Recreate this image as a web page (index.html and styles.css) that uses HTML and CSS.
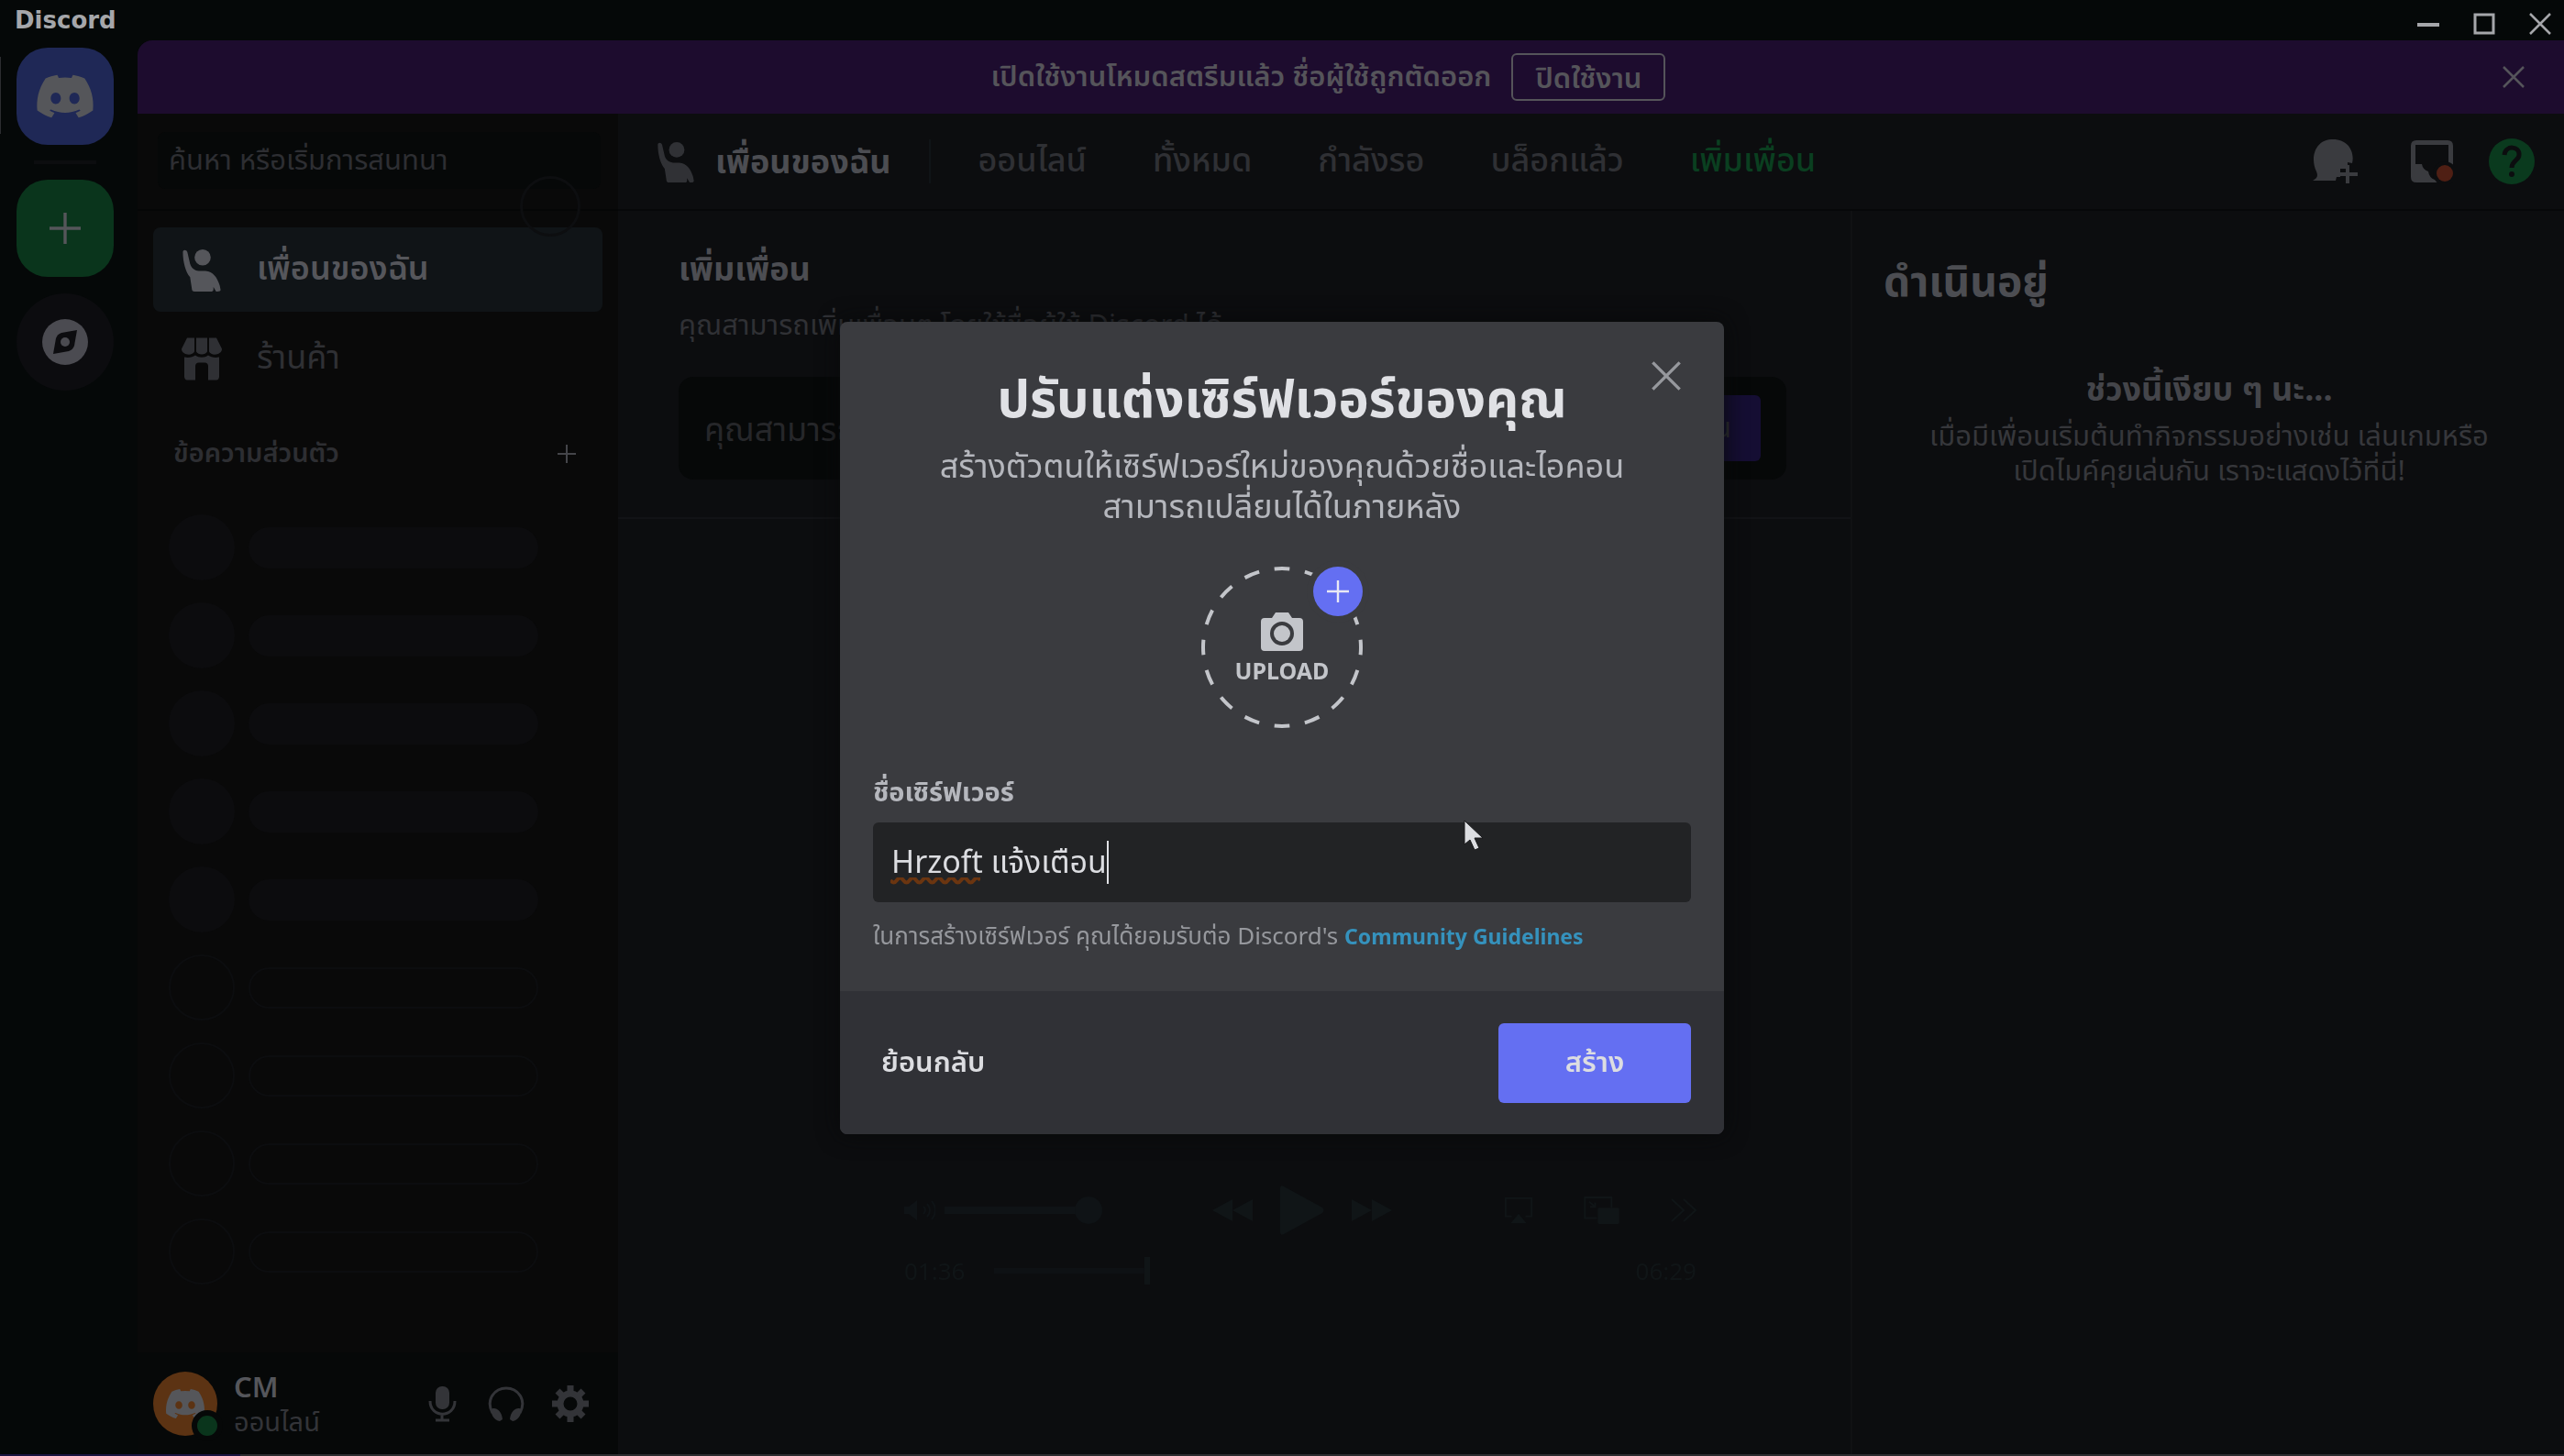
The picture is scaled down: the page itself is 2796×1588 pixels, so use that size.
FILE: index.html
```html
<!DOCTYPE html>
<html lang="th">
<head>
  <meta charset="UTF-8" />
  <title>Discord</title>
  <link rel="stylesheet" href="styles.css">
</head>
<body>

  <!-- shared icons -->
  <svg class="sprite" aria-hidden="true">
    <symbol id="logo" viewBox="0 0 24 24">
      <path fill="currentColor" d="M19.27 5.33C17.94 4.71 16.5 4.26 15 4a.09.09 0 0 0-.07.03c-.18.33-.39.76-.53 1.09a16.09 16.09 0 0 0-4.8 0c-.14-.34-.35-.76-.54-1.09c-.01-.02-.04-.03-.07-.03c-1.5.26-2.93.71-4.27 1.33c-.01 0-.02.01-.03.02c-2.72 4.07-3.47 8.03-3.1 11.95c0 .02.01.04.03.05c1.8 1.32 3.53 2.12 5.24 2.65c.03.01.06 0 .07-.02c.4-.55.76-1.13 1.07-1.74c.02-.04 0-.08-.04-.09c-.57-.22-1.11-.48-1.64-.78c-.04-.02-.04-.08-.01-.11c.11-.08.22-.17.33-.25c.02-.02.05-.02.07-.01c3.44 1.57 7.15 1.57 10.55 0c.02-.01.05-.01.07.01c.11.09.22.17.33.26c.04.03.04.09-.01.11c-.52.31-1.07.56-1.64.78c-.04.01-.05.06-.04.09c.32.61.68 1.19 1.07 1.74c.03.01.06.02.09.01c1.72-.53 3.45-1.33 5.25-2.65c.02-.01.03-.03.03-.05c.44-4.53-.73-8.46-3.1-11.95c-.01-.01-.02-.02-.04-.02zM8.52 14.91c-1.03 0-1.89-.95-1.89-2.12s.84-2.12 1.89-2.12c1.06 0 1.9.96 1.89 2.12c0 1.17-.84 2.12-1.89 2.12zm6.97 0c-1.03 0-1.89-.95-1.89-2.12s.84-2.12 1.89-2.12c1.06 0 1.9.96 1.89 2.12c0 1.17-.83 2.12-1.89 2.12z"/>
    </symbol>
    <symbol id="friend" viewBox="0 0 44 48">
      <circle cx="23" cy="10" r="9" fill="currentColor"/>
      <path fill="currentColor" d="M1 4c0-3 4-3 5 0l3 13c2 6 6 8 12 8h5c9 1 13 7 16 16l1 5c0 2-3 2-5 2l-3-5v3c0 1-1 2-2 2H14c-2 0-3-1-3-3L9 32C4 26 1 15 1 4z"/>
    </symbol>
    <symbol id="close" viewBox="0 0 24 24">
      <path d="M1 1l22 22M23 1L1 23" stroke="currentColor" stroke-width="2.5" fill="none"/>
    </symbol>
    <symbol id="plus" viewBox="0 0 24 24">
      <path d="M12 0v24M0 12h24" stroke="currentColor" stroke-width="2.4" fill="none"/>
    </symbol>
  </svg>

  <div class="titlebar">
    <span class="wordmark">Discord</span>
    <div class="window-buttons">
      <button type="button" aria-label="Minimize"><svg viewBox="0 0 24 24"><path d="M0 13h24" stroke="currentColor" stroke-width="4"/></svg></button>
      <button type="button" aria-label="Maximize"><svg viewBox="0 0 24 24"><path d="M2 2h20v20H2z" stroke="currentColor" stroke-width="3" fill="none"/></svg></button>
      <button type="button" aria-label="Close"><svg viewBox="0 0 24 24"><use href="#close"/></svg></button>
    </div>
  </div>

  <div class="app">
    <nav class="servers">
      <a class="server home" href="#" aria-label="Home"><svg><use href="#logo"/></svg></a>
      <div class="server-line"></div>
      <button type="button" class="server add" aria-label="Add"><svg><use href="#plus"/></svg></button>
      <button type="button" class="server explore" aria-label="Explore">
        <svg viewBox="0 0 50 50">
          <circle cx="25" cy="25" r="25" fill="currentColor"/>
          <path class="cut" d="M38 12l-3 17c-1 3-3 5-6 6l-17 3 3-17c1-3 3-5 6-6z"/>
          <circle cx="25" cy="25" r="5" fill="currentColor"/>
        </svg>
      </button>
    </nav>

    <div class="window">
      <div class="banner">
        <div class="banner-text">
          <span>เปิดใช้งานโหมดสตรีมแล้ว ชื่อผู้ใช้ถูกตัดออก</span>
          <button type="button">ปิดใช้งาน</button>
        </div>
        <button type="button" class="banner-close" aria-label="Close"><svg><use href="#close"/></svg></button>
      </div>

      <div class="columns">
        <aside class="sidebar">
          <div class="search">
            <button type="button">ค้นหา หรือเริ่มการสนทนา</button>
            <span class="click-ring"></span>
          </div>
          <nav class="links">
            <a class="link active" href="#"><svg><use href="#friend"/></svg>เพื่อนของฉัน</a>
            <a class="link" href="#">
              <svg viewBox="0 0 44 46">
                <path fill="currentColor" d="M6 0h8v15c-2 5-14 4-14-3zM16 0h12v15c-2 4-10 4-12 0zM30 0h8l6 12c0 7-12 8-14 3zM3 21c5 1 9 0 12-2 4 3 10 3 14 0 3 2 7 3 12 2v21c0 2-1 4-3 4h-9V31c0-2-1-4-4-4h-6c-3 0-4 2-4 4v15H6c-2 0-3-2-3-4z"/>
              </svg>ร้านค้า</a>
          </nav>
          <div class="dm-title"><span>ข้อความส่วนตัว</span><button type="button" aria-label="New"><svg><use href="#plus"/></svg></button></div>
          <ul class="skeleton">
            <li><i></i><b></b></li>
            <li><i></i><b></b></li>
            <li><i></i><b></b></li>
            <li><i></i><b></b></li>
            <li><i></i><b></b></li>
            <li class="faded"><i></i><b></b></li>
            <li class="faded"><i></i><b></b></li>
            <li class="faded"><i></i><b></b></li>
            <li class="faded"><i></i><b></b></li>
          </ul>
          <div class="user">
            <div class="avatar"><svg><use href="#logo"/></svg><span class="dot"></span></div>
            <div class="user-name"><strong>CM</strong><span>ออนไลน์</span></div>
            <button type="button" aria-label="Mute">
              <svg viewBox="0 0 40 40"><rect x="13" y="1" width="15" height="25" rx="7" fill="currentColor"/><path d="M7 17c0 19 27 19 27 0M20 31v7M13 38h15" stroke="currentColor" stroke-width="3" fill="none"/></svg>
            </button>
            <button type="button" aria-label="Deafen">
              <svg viewBox="0 0 40 40"><path d="M5 30C-3 15 8 3 20 3s23 12 15 27" stroke="currentColor" stroke-width="3" fill="none"/><path d="M3 26c5-3 12 1 13 11l-3 2c-6-1-9-6-10-13zM37 26c-5-3-12 1-13 11l3 2c6-1 9-6 10-13z" fill="currentColor"/></svg>
            </button>
            <button type="button" aria-label="Settings">
              <svg viewBox="0 0 40 40"><circle cx="20" cy="20" r="11" stroke="currentColor" stroke-width="7" fill="none"/><path d="M20 0v9M20 31v9M0 20h9M31 20h9M6 6l6 6M28 28l6 6M34 6l-6 6M12 28l-6 6" stroke="currentColor" stroke-width="7"/></svg>
            </button>
          </div>
        </aside>

        <main class="main">
          <header class="topbar">
            <h1><svg><use href="#friend"/></svg>เพื่อนของฉัน</h1>
            <nav class="tabs">
              <a href="#">ออนไลน์</a>
              <a href="#">ทั้งหมด</a>
              <a href="#">กำลังรอ</a>
              <a href="#">บล็อกแล้ว</a>
              <a class="green" href="#">เพิ่มเพื่อน</a>
            </nav>
            <div class="tools">
              <button type="button" aria-label="New group">
                <svg viewBox="0 0 50 50"><path d="M1 46c5-3 6-5 4-10C-2 22 3 1 23 1c17 0 24 14 21 26l-5-1v7h-8v9h-4l-1 4z" fill="currentColor"/><path d="M39 29v20M29 39h21" stroke="currentColor" stroke-width="4"/></svg>
              </button>
              <button type="button" aria-label="Inbox">
                <svg viewBox="0 0 50 50"><path fill="currentColor" fill-rule="evenodd" d="M10 2h34q6 0 6 6v34q0 6-6 6H10q-6 0-6-6V8q0-6 6-6zM9 7v21h7q1 6 7 8 1 7 7 9h15V7z"/><circle class="alert" cx="41" cy="38" r="13"/><circle class="alert-dot" cx="41" cy="38" r="9"/></svg>
              </button>
              <button type="button" class="help" aria-label="Help">
                <svg viewBox="0 0 50 50"><circle cx="25" cy="25" r="25" fill="currentColor"/><path class="mark" d="M17 18c1-11 17-10 16 0 0 6-8 6-8 14"/><circle class="mark-dot" cx="25" cy="39" r="3"/></svg>
              </button>
            </div>
          </header>

          <div class="content">
            <div class="people">
              <form class="add-friend">
                <h2>เพิ่มเพื่อน</h2>
                <label for="friend-name">คุณสามารถเพิ่มเพื่อนๆ โดยใช้ชื่อผู้ใช้ Discord ได้</label>
                <div class="friend-box">
                  <input id="friend-name" type="text" placeholder="คุณสามารถเพิ่มเพื่อนๆ โดยใช้ชื่อผู้ใช้ Discord ได้">
                  <button type="button">ส่งคำขอเป็นเพื่อน</button>
                </div>
              </form>
            </div>
            <aside class="activity">
              <h2>ดำเนินอยู่</h2>
              <h3>ช่วงนี้เงียบ ๆ นะ...</h3>
              <p>เมื่อมีเพื่อนเริ่มต้นทำกิจกรรมอย่างเช่น เล่นเกมหรือ<br>เปิดไมค์คุยเล่นกัน เราจะแสดงไว้ที่นี่!</p>
            </aside>
          </div>
        </main>
      </div>
    </div>
  </div>
  <div class="edge"></div>

  <!-- faint player controls that float over the page -->
  <div class="player">
    <div class="player-row">
      <div class="volume">
        <svg viewBox="0 0 34 24"><path d="M0 8h5l9-7v22l-9-7H0z" fill="currentColor"/><path d="M21 8q4 4 0 8M25 5q6 7 0 14M30 2q8 10 0 20" stroke="currentColor" stroke-width="2" fill="none"/></svg>
        <span class="volume-bar"></span>
      </div>
      <div class="transport">
        <svg class="skip" viewBox="0 0 44 24"><path d="M22 0v24L0 12zM44 0v24L22 12z" fill="currentColor"/></svg>
        <svg class="play" viewBox="0 0 48 54"><path d="M0 3q0-4 4-2l42 23q3 3 0 6L4 53q-4 2-4-2z" fill="currentColor"/></svg>
        <svg class="skip" viewBox="0 0 44 24"><path d="M0 0v24l22-12zM22 0v24l22-12z" fill="currentColor"/></svg>
      </div>
      <div class="extras">
        <svg width="32" viewBox="0 0 32 32"><path d="M8 23H1V2h30v21h-7" stroke="currentColor" stroke-width="2" fill="none"/><path d="M16 20l9 11H7z" fill="currentColor"/></svg>
        <svg width="42" viewBox="0 0 42 32"><path d="M15 25H1V1h31v12M6 6l7 6M13 7v5H7" stroke="currentColor" stroke-width="2" fill="none"/><rect x="16" y="13" width="25" height="19" rx="2" fill="currentColor"/></svg>
        <svg width="28" viewBox="0 0 28 28"><path d="M1 2l13 12L1 26M14 2l13 12-13 12" stroke="currentColor" stroke-width="2" fill="none"/></svg>
      </div>
    </div>
    <div class="player-row">
      <span>01:36</span><span class="progress"></span><span>06:29</span>
    </div>
  </div>

  <div class="overlay">
    <form class="modal" role="dialog" aria-labelledby="modal-title">
      <button type="button" class="modal-close" aria-label="Close"><svg><use href="#close"/></svg></button>
      <div class="modal-body">
        <h2 id="modal-title">ปรับแต่งเซิร์ฟเวอร์ของคุณ</h2>
        <p class="subtitle">สร้างตัวตนให้เซิร์ฟเวอร์ใหม่ของคุณด้วยชื่อและไอคอน<br>สามารถเปลี่ยนได้ในภายหลัง</p>
        <button type="button" class="upload">
          <svg class="ring" viewBox="0 0 176 176"><circle cx="88" cy="88" r="86" pathLength="320"/></svg>
          <svg class="camera" viewBox="0 0 46 42"><path fill="currentColor" fill-rule="evenodd" d="M16 0h14l4 6h8q4 0 4 4v28q0 4-4 4H4q-4 0-4-4V10q0-4 4-4h8zM23 10a13 13 0 1 0 0 26 13 13 0 0 0 0-26z"/><circle cx="23" cy="23" r="9" fill="currentColor"/></svg>
          <span>UPLOAD</span>
          <span class="upload-plus"><svg><use href="#plus"/></svg></span>
        </button>
        <label for="server-name">ชื่อเซิร์ฟเวอร์</label>
        <div class="name-box">
          <input id="server-name" type="text" value="Hrzoft แจ้งเตือน" spellcheck="false">
          <svg class="squiggle" viewBox="0 0 98 8"><path d="M0 3q3.500 5 7 0t7 0 7 0 7 0 7 0 7 0 7 0 7 0 7 0 7 0 7 0 7 0 7 0 7 0"/></svg>
          <span class="caret"></span>
        </div>
        <p class="terms">ในการสร้างเซิร์ฟเวอร์ คุณได้ยอมรับต่อ Discord's <a href="#">Community Guidelines</a></p>
      </div>
      <div class="modal-footer">
        <button type="button" class="back">ย้อนกลับ</button>
        <button type="submit" class="create">สร้าง</button>
      </div>
      <svg class="pointer" viewBox="0 0 22 34"><path d="M1 1v26l6-5 5 11 5-2-5-11h9z"/></svg>
    </form>
  </div>

</body>
</html>
```

FILE: styles.css
```css
* { box-sizing: border-box; }
body { margin: 0; height: 100vh; display: flex; flex-direction: column; overflow: hidden; background: #050808; color: #3a3b40; font-family: "Noto Sans", "Noto Sans Thai", sans-serif; font-size: 31px; }
button { border: none; padding: 0; background: none; color: inherit; font: inherit; }
a { color: inherit; text-decoration: none; }
h1, h2, h3, p, ul { margin: 0; padding: 0; }
input { border: none; outline: none; background: none; font: inherit; }
svg { display: block; flex: none; }
.sprite { position: absolute; width: 0; height: 0; }

/* title bar */
.titlebar { display: flex; justify-content: space-between; height: 44px; padding: 0 14px 0 16px; color: #a5a6aa; }
.wordmark { font-family: "DejaVu Sans", sans-serif; font-size: 26px; font-weight: 700; line-height: 44px; }
.window-buttons { display: flex; gap: 37px; padding-top: 7px; }
.window-buttons svg { width: 24px; height: 24px; }

.app { display: flex; flex: 1; min-height: 0; }
.servers { display: flex; flex-direction: column; align-items: center; width: 150px; padding: 8px 8px 0 0; }
.server { display: flex; align-items: center; justify-content: center; width: 106px; height: 106px; border-radius: 34px; color: #55565a; }
.home { position: relative; background: #1f2856; }
.home::before { content: ""; position: absolute; top: 10px; left: -18px; width: 1px; height: 84px; background: #2c2d30; }
.home svg { width: 70px; height: 70px; }
.server-line { width: 68px; height: 4px; margin: 17px 0; background: #0c0d0f; }
.add { background: #0a351c; }
.add svg { width: 34px; height: 34px; }
.explore { margin-top: 18px; border-radius: 50%; background: #0c0c0f; color: #4b4b51; }
.explore svg { width: 50px; height: 50px; }
.cut { fill: #0c0c0f; }

.window { display: flex; flex: 1; flex-direction: column; min-width: 0; border-radius: 16px 0 0 0; overflow: hidden; background: #090909; }
.banner { display: flex; align-items: center; height: 80px; padding: 0 43px 0 66px; background: #1d0c2e; color: #55545a; font-weight: 600; }
.banner-text { display: flex; flex: 1; align-items: center; justify-content: center; gap: 22px; padding-right: 48px; }
.banner-text button { height: 52px; padding: 0 24px; border: 2px solid #55545a; border-radius: 6px; line-height: 48px; }
.banner-close svg { width: 24px; height: 24px; }
.columns { display: flex; flex: 1; min-height: 0; }

/* left column */
.sidebar { display: flex; flex-direction: column; width: 524px; }
.search { position: relative; height: 106px; padding: 20px 19px 0 22px; border-bottom: 2px solid #050606; }
.search button { width: 100%; height: 62px; padding-left: 12px; border-radius: 8px; background: #060808; color: #2d2e32; text-align: left; }
.click-ring { position: absolute; top: 68px; left: 417px; width: 66px; height: 66px; border: 3px solid #0d0e10; border-radius: 50%; }
.links { display: flex; flex-direction: column; gap: 5px; padding: 18px 17px 0; }
.link { display: flex; align-items: center; gap: 38px; height: 92px; padding-left: 31px; border-radius: 8px; color: #2f3034; font-size: 36px; }
.link svg { width: 44px; height: 47px; }
.link.active { background: #101417; color: #55565b; font-weight: 600; }
.dm-title { display: flex; align-items: center; justify-content: space-between; margin: 37px 46px 0 39px; height: 42px; font-size: 29px; font-weight: 600; color: #2d2e32; }
.dm-title svg { width: 20px; height: 20px; color: #44454a; }
.skeleton { display: flex; flex: 1; flex-direction: column; gap: 24px; padding: 45px 0 0 34px; list-style: none; }
.skeleton li { display: flex; align-items: center; gap: 15px; }
.skeleton i { width: 72px; height: 72px; border-radius: 50%; background: #0c0c0e; }
.skeleton b { width: 316px; height: 45px; border-radius: 23px; background: #0c0c0e; }
.skeleton .faded i, .skeleton .faded b { border: 2px solid #0c0d0f; background: none; }
.user { display: flex; align-items: center; gap: 30px; height: 111px; padding: 0 32px 0 17px; background: #060808; color: #333438; }
.user > button svg { width: 40px; height: 40px; }
.avatar { position: relative; display: flex; align-items: center; justify-content: center; width: 70px; height: 70px; border-radius: 50%; background: #5c3313; color: #55565a; }
.avatar svg { width: 48px; height: 48px; }
.dot { position: absolute; right: -6px; bottom: -6px; width: 34px; height: 34px; border: 6px solid #060808; border-radius: 50%; background: #0a351c; }
.user-name { display: flex; flex: 1; flex-direction: column; margin-left: -12px; line-height: 38px; font-size: 29px; }
.user-name strong { font-size: 31px; font-weight: 600; color: #55565b; }
.edge { height: 2px; background: linear-gradient(90deg, #1a1440 262px, #2c2c2f 262px); }

/* friends page */
.main { display: flex; flex: 1; flex-direction: column; min-width: 0; background: #0c0d0f; }
.topbar { display: flex; align-items: center; height: 106px; padding: 0 32px 0 42px; border-bottom: 2px solid #070809; font-size: 36px; }
.topbar h1 { display: flex; align-items: center; gap: 22px; padding-right: 42px; border-right: 2px solid #101417; color: #4c4d52; font-size: 36px; line-height: 48px; font-weight: 700; }
.topbar h1 svg { width: 42px; height: 45px; color: #303135; }
.tabs { display: flex; flex: 1; gap: 72px; padding-left: 51px; color: #2f3034; font-weight: 500; white-space: nowrap; }
.green { color: #0a3f20; }
.tools { display: flex; gap: 54px; color: #3a3b3f; }
.tools svg { width: 50px; height: 50px; }
.tools .help { margin-left: -15px; color: #0a3a1e; }
.alert { fill: #0c0d0f; }
.alert-dot { fill: #4f1f14; }
.mark { fill: none; stroke: #0c0d0f; stroke-width: 5; }
.mark-dot { fill: #0c0d0f; }
.content { display: flex; flex: 1; min-height: 0; }
.people { flex: 1; }
.add-friend { padding: 38px 70px 41px 66px; border-bottom: 2px solid #121316; }
.add-friend h2 { color: #4c4d52; font-size: 36px; line-height: 50px; }
.add-friend label { display: block; margin-top: 10px; line-height: 50px; color: #303135; }
.friend-box { display: flex; align-items: center; height: 112px; margin-top: 33px; padding: 0 28px 0 26px; border-radius: 16px; background: #060808; }
.friend-box input { flex: 1; font-size: 36px; }
.friend-box input::placeholder { color: #26272a; }
.friend-box button { height: 72px; padding: 0 32px; border-radius: 6px; background: #150e33; color: #2f3034; }
.activity { width: 778px; padding: 44px 32px 0 34px; border-left: 2px solid #101113; text-align: center; }
.activity h2 { color: #4c4d52; font-size: 46px; line-height: 62px; text-align: left; }
.activity h3 { margin-top: 63px; color: #44454a; font-size: 36px; line-height: 50px; }
.activity p { margin-top: 6px; line-height: 38px; color: #36373b; white-space: nowrap; }

.player { position: fixed; top: 1290px; left: 50%; display: flex; flex-direction: column; gap: 6px; width: 864px; transform: translateX(-412px); color: #101517; font-size: 26px; }
.player-row { display: flex; align-items: center; justify-content: space-between; height: 60px; }
.volume, .transport, .extras { display: flex; align-items: center; }
.volume { gap: 10px; color: #0f1316; }
.volume svg { width: 34px; height: 24px; }
.volume-bar { width: 157px; height: 8px; background: currentColor; }
.volume-bar::after { content: ""; display: block; width: 30px; height: 30px; margin: -11px 0 0 142px; border-radius: 50%; background: currentColor; }
.transport { gap: 30px; padding-left: 12px; }
.skip { width: 44px; height: 24px; }
.play { width: 48px; height: 54px; }
.extras { gap: 54px; }
.extras svg { height: 30px; }
.progress { flex: 1; height: 30px; margin: 0 530px 0 32px; border-right: 6px solid; background: linear-gradient(#0e1114, #0e1114) center / 100% 6px no-repeat; }

/* create server dialog */
.overlay { position: fixed; inset: 0; display: flex; align-items: center; justify-content: center; }
.modal { position: relative; width: 964px; border-radius: 8px; background: #3a3b3f; box-shadow: 0 0 24px #08090a; color: #b5b7bd; }
.modal-close { position: absolute; top: 43px; right: 47px; color: #96989d; }
.modal-close svg { width: 32px; height: 32px; }
.modal-body { display: flex; flex-direction: column; padding: 44px 36px 42px; }
.modal h2 { color: #e0e1e5; font-size: 56px; line-height: 76px; text-align: center; }
.subtitle { margin-top: 15px; font-size: 36px; line-height: 44px; text-align: center; }
.upload { position: relative; display: flex; flex-direction: column; align-items: center; align-self: center; width: 176px; height: 176px; margin-top: 44px; padding-top: 50px; color: #c3c5ca; font-size: 25px; line-height: 32px; font-weight: 700; }
.ring { position: absolute; inset: 0; fill: none; stroke: currentColor; stroke-width: 4; stroke-dasharray: 10 10; stroke-dashoffset: 5; }
.camera { width: 46px; height: 42px; margin-bottom: 5px; }
.upload-plus { position: absolute; top: 0; right: 0; display: flex; align-items: center; justify-content: center; width: 54px; height: 54px; border-radius: 50%; background: #646ff2; color: #e8e8f4; box-shadow: 0 0 0 7px #3a3b3f; }
.upload-plus svg { width: 24px; height: 24px; }
.modal label { margin-top: 51px; font-size: 29px; line-height: 36px; font-weight: 700; }
.name-box { position: relative; margin-top: 16px; }
.name-box input { width: 100%; height: 87px; padding: 2px 20px 0; border-radius: 6px; background: #222325; color: #dcdde1; font-size: 34px; }
.squiggle { position: absolute; top: 60px; left: 19px; width: 98px; height: 8px; fill: none; stroke: #6b3510; stroke-width: 4; }
.caret { position: absolute; top: 20px; left: 255px; width: 2px; height: 47px; background: #e0e1e5; }
.terms { margin-top: 18px; color: #96989d; font-size: 26px; line-height: 36px; }
.terms a { color: #3592bd; font-size: 23px; font-weight: 700; }
.modal-footer { display: flex; align-items: center; justify-content: space-between; height: 156px; padding: 0 36px 0 45px; border-radius: 0 0 8px 8px; background: #303136; color: #dcdde1; font-weight: 600; }
.create { width: 210px; height: 87px; border-radius: 6px; background: #646ff2; }
.pointer { position: absolute; top: 543px; left: 680px; width: 22px; height: 34px; fill: #dcdde1; stroke: #18191b; stroke-width: 1; }
```
